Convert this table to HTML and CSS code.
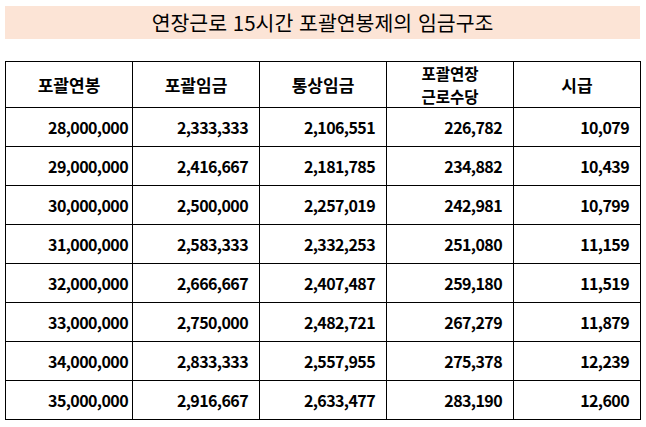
FILE: index.html
```html
<!DOCTYPE html>
<html lang="ko">
<head>
<meta charset="utf-8">
<link rel="stylesheet" href="styles.css">
</head>
<body>
<div class="title">연장근로 15시간 포괄연봉제의 임금구조</div>
<table class="wage">
<thead>
<tr><th>포괄연봉</th><th>포괄임금</th><th>통상임금</th><th class="two-line">포괄연장<br>근로수당</th><th>시급</th></tr>
</thead>
<tbody>
<tr><td>28,000,000</td><td>2,333,333</td><td>2,106,551</td><td>226,782</td><td>10,079</td></tr>
<tr><td>29,000,000</td><td>2,416,667</td><td>2,181,785</td><td>234,882</td><td>10,439</td></tr>
<tr><td>30,000,000</td><td>2,500,000</td><td>2,257,019</td><td>242,981</td><td>10,799</td></tr>
<tr><td>31,000,000</td><td>2,583,333</td><td>2,332,253</td><td>251,080</td><td>11,159</td></tr>
<tr><td>32,000,000</td><td>2,666,667</td><td>2,407,487</td><td>259,180</td><td>11,519</td></tr>
<tr><td>33,000,000</td><td>2,750,000</td><td>2,482,721</td><td>267,279</td><td>11,879</td></tr>
<tr><td>34,000,000</td><td>2,833,333</td><td>2,557,955</td><td>275,378</td><td>12,239</td></tr>
<tr><td>35,000,000</td><td>2,916,667</td><td>2,633,477</td><td>283,190</td><td>12,600</td></tr>
</tbody>
</table>
</body>
</html>
```
FILE: styles.css
```css
html, body {
  margin: 0;
  padding: 0;
  background: #ffffff;
}
body {
  padding: 6px 0 0 5px;
  font-family: "Noto Sans CJK KR", "Noto Sans", sans-serif;
  color: #000000;
}
.title {
  width: 635px;
  height: 33px;
  background: #fce4d6;
  font-size: 20.5px;
  line-height: 33px;
  text-align: center;
  font-weight: 400;
}
.wage {
  margin-top: 22px;
  width: 636px;
  table-layout: fixed;
  border-collapse: collapse;
}
.wage th, .wage td {
  border: 1px solid #000000;
  padding: 0 11px 0 0;
  font-weight: 700;
}
.wage th {
  height: 45px;
  padding: 0;
  text-align: center;
  font-size: 17px;
  line-height: 22px;
}
.wage th.two-line {
  font-size: 15.5px;
  line-height: 22.5px;
}
.wage td {
  height: 38px;
  text-align: right;
  font-size: 16px;
  letter-spacing: -0.6px;
  line-height: 20px;
}
.wage td:first-child {
  padding-right: 4px;
}
```
